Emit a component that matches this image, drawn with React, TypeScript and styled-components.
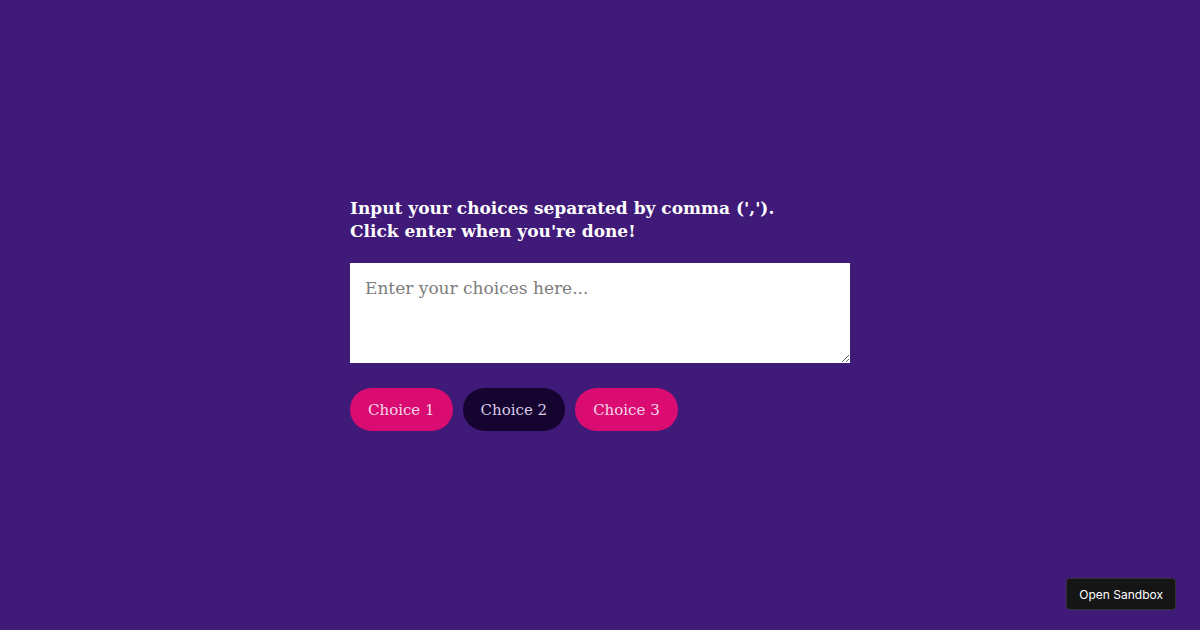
import React from 'react';
import styled, { createGlobalStyle } from 'styled-components';

const GlobalStyle = createGlobalStyle`
  html, body {
    margin: 0;
    height: 100%;
  }
  body {
    background-color: #3f1a78;
    font-family: 'DejaVu Serif', 'Liberation Serif', serif;
  }
  #root {
    height: 100%;
  }
`;

const Page = styled.div`
  height: 100%;
  display: flex;
  justify-content: center;
  align-items: center;
`;

const Panel = styled.div`
  width: 500px;
  display: flex;
  flex-direction: column;
  margin-top: -2px;
`;

const Heading = styled.h3`
  margin: 0 0 20px;
  color: #ffffff;
  font-size: 17px;
  font-weight: 700;
  line-height: 23px;
`;

const ChoiceInput = styled.textarea`
  box-sizing: border-box;
  width: 500px;
  height: 100px;
  padding: 15px 15px;
  border: none;
  outline: none;
  font-family: inherit;
  font-size: 17px;
  color: #333;

  &::placeholder {
    color: #7c7c7c;
  }
`;

const Choices = styled.div`
  display: flex;
  gap: 10px;
  margin-top: 25px;
`;

const ChoiceTag = styled.span<{ selected: boolean }>`
  display: inline-flex;
  align-items: center;
  justify-content: center;
  height: 43px;
  padding: 0 18px;
  border-radius: 22px;
  font-size: 15px;
  color: ${({ selected }) => (selected ? '#d9cbe6' : '#f4d6e6')};
  background-color: ${({ selected }) => (selected ? '#150330' : '#da0c72')};
`;

const SandboxButton = styled.button`
  position: fixed;
  right: 24px;
  bottom: 20px;
  height: 32px;
  padding: 0 12px;
  border: 1px solid #333;
  border-radius: 4px;
  background-color: #151515;
  color: #ffffff;
  font-family: Inter, 'Liberation Sans', sans-serif;
  font-size: 12px;
`;

const choices = ['Choice 1', 'Choice 2', 'Choice 3'];

const App = () => (
  <>
    <GlobalStyle />
    <Page>
      <Panel>
        <Heading>
          Input your choices separated by comma (',').
          <br />
          Click enter when you're done!
        </Heading>
        <ChoiceInput placeholder="Enter your choices here..." />
        <Choices>
          {choices.map((choice, i) => (
            <ChoiceTag key={choice} selected={i === 1}>
              {choice}
            </ChoiceTag>
          ))}
        </Choices>
      </Panel>
    </Page>
    <SandboxButton>Open Sandbox</SandboxButton>
  </>
);

export default App;
